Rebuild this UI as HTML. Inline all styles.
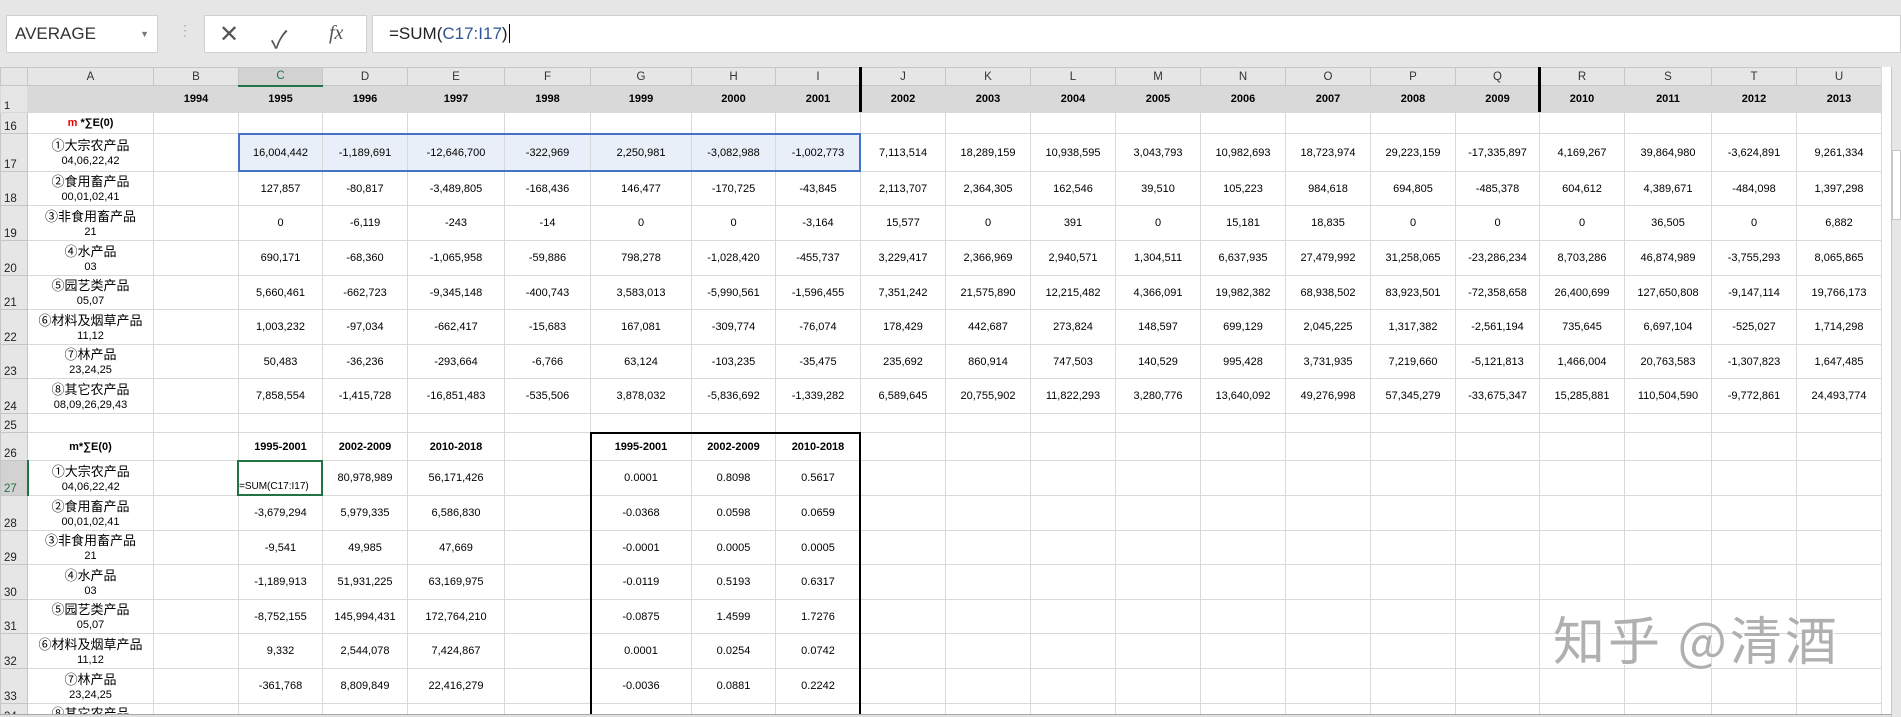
<!DOCTYPE html>
<html><head><meta charset="utf-8"><style>
*{box-sizing:border-box;margin:0;padding:0}
html{width:1901px;height:717px;overflow:hidden}
body{width:1901px;height:717px;overflow:hidden;background:#fff;font-family:"Liberation Sans","Noto Sans CJK SC",sans-serif;position:relative}
#top{position:absolute;left:0;top:0;width:1901px;height:67px;background:#e6e6e6}
.box{position:absolute;background:#fff;border:1px solid #d0d0d0}
#wrap{position:absolute;left:0;top:67px;width:1881px;height:647px;overflow:hidden}
table{position:absolute;left:0;top:0;border-collapse:collapse;table-layout:fixed;width:1881px}
td{border:1px solid #d9d9d9;font-size:11px;text-align:center;vertical-align:middle;white-space:nowrap;overflow:hidden;color:#000;padding:0}
td.r{background:#e6e6e6;text-align:left;vertical-align:bottom;font-size:11.5px;padding-left:3px;color:#222;border-color:#c6c6c6}
tr.h td{background:#e6e6e6;font-size:11.5px;color:#333;border-color:#c6c6c6}
tr.y td{background:#d9d9d9;font-weight:bold;font-size:11px;border-color:#d9d9d9}
td.l{font-size:13px;line-height:17px}
td.l small{display:block;font-size:11px;line-height:14px}
td.b{font-weight:bold}
.sel{background:#e9eff8}
</style></head><body>
<div id="top">
<div class="box" style="left:6px;top:15px;width:152px;height:38px;font-size:17px;line-height:36px;padding-left:8px;color:#333">AVERAGE<span style="position:absolute;right:8px;font-size:9px;color:#777">▼</span></div>
<div style="position:absolute;left:178px;top:22px;color:#aaa;font-size:14px">⋮</div>
<div class="box" style="left:204px;top:15px;width:163px;height:38px">
<span style="position:absolute;left:14px;top:4px;font-size:24px;color:#555">✕</span>
<span style="position:absolute;left:66px;top:4px;font-size:24px;color:#555">✓</span>
<span style="position:absolute;left:124px;top:6px;font-size:20px;color:#555;font-style:italic;font-family:'Liberation Serif',serif">fx</span></div>
<div class="box" style="left:372px;top:15px;width:1529px;height:38px;font-size:17px;line-height:36px;padding-left:16px;color:#222">=SUM(<span style="color:#2f5597">C17:I17</span>)<span style="border-left:1px solid #000;margin-left:1px"></span></div>
</div>
<div id="wrap">
<table>
<colgroup><col style="width:27px"><col style="width:126px"><col style="width:85px"><col style="width:84px"><col style="width:85px"><col style="width:97px"><col style="width:86px"><col style="width:101px"><col style="width:84px"><col style="width:85px"><col style="width:85px"><col style="width:85px"><col style="width:85px"><col style="width:85px"><col style="width:85px"><col style="width:85px"><col style="width:85px"><col style="width:84px"><col style="width:85px"><col style="width:87px"><col style="width:85px"><col style="width:85px"></colgroup>
<tr class="h" style="height:18px"><td></td><td>A</td><td>B</td><td style="background:#d2d2d2;border-bottom:2px solid #217346;color:#217346">C</td><td>D</td><td>E</td><td>F</td><td>G</td><td>H</td><td>I</td><td>J</td><td>K</td><td>L</td><td>M</td><td>N</td><td>O</td><td>P</td><td>Q</td><td>R</td><td>S</td><td>T</td><td>U</td></tr>
<tr class="y" style="height:27px"><td class="r" style="background:#e6e6e6;font-weight:normal">1</td><td></td><td>1994</td><td>1995</td><td>1996</td><td>1997</td><td>1998</td><td>1999</td><td>2000</td><td>2001</td><td>2002</td><td>2003</td><td>2004</td><td>2005</td><td>2006</td><td>2007</td><td>2008</td><td>2009</td><td>2010</td><td>2011</td><td>2012</td><td>2013</td></tr>
<tr style="height:21px"><td class="r">16</td><td class="b"><span style="color:#e00">m</span> *∑E(0)</td><td></td><td></td><td></td><td></td><td></td><td></td><td></td><td></td><td></td><td></td><td></td><td></td><td></td><td></td><td></td><td></td><td></td><td></td><td></td><td></td></tr>
<tr style="height:38px"><td class="r">17</td><td class="l">①大宗农产品<small>04,06,22,42</small></td><td></td><td class="sel">16,004,442</td><td class="sel">-1,189,691</td><td class="sel">-12,646,700</td><td class="sel">-322,969</td><td class="sel">2,250,981</td><td class="sel">-3,082,988</td><td class="sel">-1,002,773</td><td>7,113,514</td><td>18,289,159</td><td>10,938,595</td><td>3,043,793</td><td>10,982,693</td><td>18,723,974</td><td>29,223,159</td><td>-17,335,897</td><td>4,169,267</td><td>39,864,980</td><td>-3,624,891</td><td>9,261,334</td></tr>
<tr style="height:34px"><td class="r">18</td><td class="l">②食用畜产品<small>00,01,02,41</small></td><td></td><td>127,857</td><td>-80,817</td><td>-3,489,805</td><td>-168,436</td><td>146,477</td><td>-170,725</td><td>-43,845</td><td>2,113,707</td><td>2,364,305</td><td>162,546</td><td>39,510</td><td>105,223</td><td>984,618</td><td>694,805</td><td>-485,378</td><td>604,612</td><td>4,389,671</td><td>-484,098</td><td>1,397,298</td></tr>
<tr style="height:35px"><td class="r">19</td><td class="l">③非食用畜产品<small>21</small></td><td></td><td>0</td><td>-6,119</td><td>-243</td><td>-14</td><td>0</td><td>0</td><td>-3,164</td><td>15,577</td><td>0</td><td>391</td><td>0</td><td>15,181</td><td>18,835</td><td>0</td><td>0</td><td>0</td><td>36,505</td><td>0</td><td>6,882</td></tr>
<tr style="height:35px"><td class="r">20</td><td class="l">④水产品<small>03</small></td><td></td><td>690,171</td><td>-68,360</td><td>-1,065,958</td><td>-59,886</td><td>798,278</td><td>-1,028,420</td><td>-455,737</td><td>3,229,417</td><td>2,366,969</td><td>2,940,571</td><td>1,304,511</td><td>6,637,935</td><td>27,479,992</td><td>31,258,065</td><td>-23,286,234</td><td>8,703,286</td><td>46,874,989</td><td>-3,755,293</td><td>8,065,865</td></tr>
<tr style="height:34px"><td class="r">21</td><td class="l">⑤园艺类产品<small>05,07</small></td><td></td><td>5,660,461</td><td>-662,723</td><td>-9,345,148</td><td>-400,743</td><td>3,583,013</td><td>-5,990,561</td><td>-1,596,455</td><td>7,351,242</td><td>21,575,890</td><td>12,215,482</td><td>4,366,091</td><td>19,982,382</td><td>68,938,502</td><td>83,923,501</td><td>-72,358,658</td><td>26,400,699</td><td>127,650,808</td><td>-9,147,114</td><td>19,766,173</td></tr>
<tr style="height:35px"><td class="r">22</td><td class="l">⑥材料及烟草产品<small>11,12</small></td><td></td><td>1,003,232</td><td>-97,034</td><td>-662,417</td><td>-15,683</td><td>167,081</td><td>-309,774</td><td>-76,074</td><td>178,429</td><td>442,687</td><td>273,824</td><td>148,597</td><td>699,129</td><td>2,045,225</td><td>1,317,382</td><td>-2,561,194</td><td>735,645</td><td>6,697,104</td><td>-525,027</td><td>1,714,298</td></tr>
<tr style="height:34px"><td class="r">23</td><td class="l">⑦林产品<small>23,24,25</small></td><td></td><td>50,483</td><td>-36,236</td><td>-293,664</td><td>-6,766</td><td>63,124</td><td>-103,235</td><td>-35,475</td><td>235,692</td><td>860,914</td><td>747,503</td><td>140,529</td><td>995,428</td><td>3,731,935</td><td>7,219,660</td><td>-5,121,813</td><td>1,466,004</td><td>20,763,583</td><td>-1,307,823</td><td>1,647,485</td></tr>
<tr style="height:35px"><td class="r">24</td><td class="l">⑧其它农产品<small>08,09,26,29,43</small></td><td></td><td>7,858,554</td><td>-1,415,728</td><td>-16,851,483</td><td>-535,506</td><td>3,878,032</td><td>-5,836,692</td><td>-1,339,282</td><td>6,589,645</td><td>20,755,902</td><td>11,822,293</td><td>3,280,776</td><td>13,640,092</td><td>49,276,998</td><td>57,345,279</td><td>-33,675,347</td><td>15,285,881</td><td>110,504,590</td><td>-9,772,861</td><td>24,493,774</td></tr>
<tr style="height:19px"><td class="r">25</td><td></td><td></td><td></td><td></td><td></td><td></td><td></td><td></td><td></td><td></td><td></td><td></td><td></td><td></td><td></td><td></td><td></td><td></td><td></td><td></td><td></td></tr>
<tr style="height:28px"><td class="r">26</td><td class="b">m*∑E(0)</td><td></td><td class="b">1995-2001</td><td class="b">2002-2009</td><td class="b">2010-2018</td><td></td><td class="b">1995-2001</td><td class="b">2002-2009</td><td class="b">2010-2018</td><td></td><td></td><td></td><td></td><td></td><td></td><td></td><td></td><td></td><td></td><td></td><td></td></tr>
<tr style="height:35px"><td class="r" style="background:#d2d2d2;color:#217346;border-right:2px solid #217346">27</td><td class="l">①大宗农产品<small>04,06,22,42</small></td><td></td><td style="vertical-align:bottom;font-size:10px;text-align:left;padding-bottom:3px">=SUM(C17:I17)</td><td>80,978,989</td><td>56,171,426</td><td></td><td>0.0001</td><td>0.8098</td><td>0.5617</td><td></td><td></td><td></td><td></td><td></td><td></td><td></td><td></td><td></td><td></td><td></td><td></td></tr>
<tr style="height:35px"><td class="r">28</td><td class="l">②食用畜产品<small>00,01,02,41</small></td><td></td><td>-3,679,294</td><td>5,979,335</td><td>6,586,830</td><td></td><td>-0.0368</td><td>0.0598</td><td>0.0659</td><td></td><td></td><td></td><td></td><td></td><td></td><td></td><td></td><td></td><td></td><td></td><td></td></tr>
<tr style="height:34px"><td class="r">29</td><td class="l">③非食用畜产品<small>21</small></td><td></td><td>-9,541</td><td>49,985</td><td>47,669</td><td></td><td>-0.0001</td><td>0.0005</td><td>0.0005</td><td></td><td></td><td></td><td></td><td></td><td></td><td></td><td></td><td></td><td></td><td></td><td></td></tr>
<tr style="height:35px"><td class="r">30</td><td class="l">④水产品<small>03</small></td><td></td><td>-1,189,913</td><td>51,931,225</td><td>63,169,975</td><td></td><td>-0.0119</td><td>0.5193</td><td>0.6317</td><td></td><td></td><td></td><td></td><td></td><td></td><td></td><td></td><td></td><td></td><td></td><td></td></tr>
<tr style="height:34px"><td class="r">31</td><td class="l">⑤园艺类产品<small>05,07</small></td><td></td><td>-8,752,155</td><td>145,994,431</td><td>172,764,210</td><td></td><td>-0.0875</td><td>1.4599</td><td>1.7276</td><td></td><td></td><td></td><td></td><td></td><td></td><td></td><td></td><td></td><td></td><td></td><td></td></tr>
<tr style="height:35px"><td class="r">32</td><td class="l">⑥材料及烟草产品<small>11,12</small></td><td></td><td>9,332</td><td>2,544,078</td><td>7,424,867</td><td></td><td>0.0001</td><td>0.0254</td><td>0.0742</td><td></td><td></td><td></td><td></td><td></td><td></td><td></td><td></td><td></td><td></td><td></td><td></td></tr>
<tr style="height:35px"><td class="r">33</td><td class="l">⑦林产品<small>23,24,25</small></td><td></td><td>-361,768</td><td>8,809,849</td><td>22,416,279</td><td></td><td>-0.0036</td><td>0.0881</td><td>0.2242</td><td></td><td></td><td></td><td></td><td></td><td></td><td></td><td></td><td></td><td></td><td></td><td></td></tr>
<tr style="height:20px"><td class="r">34</td><td class="l">⑧其它农产品</td><td></td><td></td><td></td><td></td><td></td><td></td><td></td><td></td><td></td><td></td><td></td><td></td><td></td><td></td><td></td><td></td><td></td><td></td><td></td><td></td></tr>
</table>
<div style="position:absolute;left:238px;top:66px;width:623px;height:39px;border:2px solid #4472c4"></div>
<div style="position:absolute;left:237px;top:393px;width:86px;height:36px;border:2px solid #217346"></div>
<div style="position:absolute;left:590px;top:365px;width:271px;height:300px;border:2px solid #000"></div>
<div style="position:absolute;left:859px;top:0;width:3px;height:45px;background:#000"></div>
<div style="position:absolute;left:1538px;top:0;width:3px;height:45px;background:#000"></div>
</div>
<div style="position:absolute;left:1881px;top:67px;width:10px;height:650px;background:#fff;border-left:1px solid #d9d9d9"></div>
<div style="position:absolute;left:1891px;top:67px;width:10px;height:650px;background:#e6e6e6;border-left:1px solid #c6c6c6"></div>
<div style="position:absolute;left:1892px;top:150px;width:9px;height:70px;background:#fff;border:1px solid #c6c6c6"></div>
<div style="position:absolute;left:0;top:714px;width:1891px;height:3px;background:#e0e0e0;border-top:1px solid #aaa"></div>
<div style="position:absolute;left:1553px;top:603px;font-size:52px;line-height:70px;color:#b0b0b0;font-family:'Noto Sans CJK SC',sans-serif;letter-spacing:3px;text-shadow:1px 1px 0 #fff">知乎 @清酒</div>
</body></html>
